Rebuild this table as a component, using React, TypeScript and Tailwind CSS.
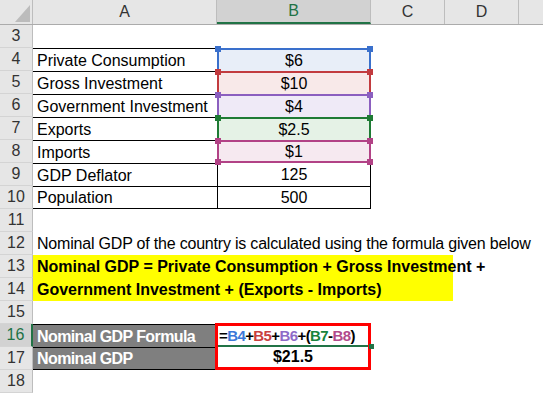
import React from "react";

const INPUTS = [
  { row: 4, label: "Private Consumption", value: "$6", border: "border-[#3a70cc]", fill: "bg-[#e8eef8]", handle: "bg-[#3a70cc]" },
  { row: 5, label: "Gross Investment", value: "$10", border: "border-[#c23b3f]", fill: "bg-[#f8e9e9]", handle: "bg-[#c23b3f]" },
  { row: 6, label: "Government Investment", value: "$4", border: "border-[#8b5fbf]", fill: "bg-[#efeaf7]", handle: "bg-[#8b5fbf]" },
  { row: 7, label: "Exports", value: "$2.5", border: "border-[#1e7b34]", fill: "bg-[#e5f2e6]", handle: "bg-[#1e7b34]" },
  { row: 8, label: "Imports", value: "$1", border: "border-[#b24286]", fill: "bg-[#f6e9f0]", handle: "bg-[#b24286]" },
];

const PLAIN = [
  { row: 9, label: "GDP Deflator", value: "125" },
  { row: 10, label: "Population", value: "500" },
];

function RowHead({ n, active }: { n: number; active?: boolean }) {
  return (
    <div
      className={`flex h-[23px] w-[33px] shrink-0 items-center justify-center border-b border-b-[#d4d4d4] ${
        active
          ? "border-r-2 border-r-[#217346] bg-[#d2d2d2] text-[#217346]"
          : "border-r border-r-[#bdbdbd] bg-[#e6e6e6] text-[#333333]"
      }`}
    >
      {n}
    </div>
  );
}

export default function App() {
  return (
    <div className="h-[393px] w-[543px] overflow-hidden bg-white font-['Liberation_Sans',Arial,sans-serif] text-[16px] leading-none text-black">
      {/* column headers */}
      <div className="flex h-[25px] border-b border-[#ababab] bg-[#e6e6e6] text-[#333333]">
        <div className="flex w-[33px] shrink-0 items-end justify-end border-r border-[#bdbdbd] pb-[2px] pr-[2px]">
          <svg width="15" height="17" viewBox="0 0 15 17">
            <polygon points="0,17 15,17 15,0" fill="#bcbcbc" />
          </svg>
        </div>
        <div className="flex w-[184px] items-center justify-center border-r border-[#bdbdbd]">A</div>
        <div className="flex w-[154px] items-center justify-center border-b-2 border-r border-b-[#217346] border-r-[#bdbdbd] bg-[#d2d2d2] text-[#217346]">
          B
        </div>
        <div className="flex w-[74px] items-center justify-center border-r border-[#bdbdbd]">C</div>
        <div className="flex w-[74px] items-center justify-center border-r border-[#bdbdbd]">D</div>
        <div className="flex-1" />
      </div>

      {/* row 3 */}
      <div className="flex h-[23px]">
        <RowHead n={3} />
      </div>

      {INPUTS.map((c, i) => (
        <div key={c.row} className="flex h-[23px]">
          <RowHead n={c.row} />
          <div className="flex w-[184px] items-center border-t border-black pl-[4px] pt-[1px]">{c.label}</div>
          <div
            className={`relative flex w-[154px] items-center justify-center border-x-2 border-t-2 pt-[1px] ${c.border} ${c.fill} ${
              i === INPUTS.length - 1 ? "border-b-2" : ""
            }`}
          >
            {c.value}
            <span className={`absolute -left-[4px] -top-[4px] h-[6px] w-[6px] ${c.handle}`} />
            <span className={`absolute -right-[4px] -top-[4px] h-[6px] w-[6px] ${c.handle}`} />
            {i === INPUTS.length - 1 && (
              <>
                <span className={`absolute -bottom-[4px] -left-[4px] h-[6px] w-[6px] ${c.handle}`} />
                <span className={`absolute -bottom-[4px] -right-[4px] h-[6px] w-[6px] ${c.handle}`} />
              </>
            )}
          </div>
        </div>
      ))}

      {PLAIN.map((c, i) => (
        <div key={c.row} className="flex h-[23px]">
          <RowHead n={c.row} />
          <div className={`flex w-[184px] items-center border-t border-black pl-[4px] pt-[1px] ${i === 1 ? "border-b" : ""}`}>
            {c.label}
          </div>
          <div className={`flex w-[154px] items-center justify-center border-x border-black pt-[1px] ${i === 1 ? "border-y" : ""}`}>
            {c.value}
          </div>
        </div>
      ))}

      <div className="flex h-[23px]">
        <RowHead n={11} />
      </div>

      <div className="flex h-[23px]">
        <RowHead n={12} />
        <div className="flex items-center whitespace-nowrap pl-[4px] pt-[1px] tracking-[-0.2px]">
          Nominal GDP of the country is calculated using the formula given below
        </div>
      </div>

      {/* yellow formula note */}
      <div className="flex">
        <div className="flex flex-col">
          <RowHead n={13} />
          <RowHead n={14} />
        </div>
        <div className="flex h-[46px] w-[420px] flex-col bg-[#ffff00] pl-[4px] font-bold whitespace-nowrap">
          <div className="flex h-[23px] items-center pt-[1px]">Nominal GDP = Private Consumption + Gross Investment +</div>
          <div className="flex h-[23px] items-center pt-[1px]">Government Investment + (Exports - Imports)</div>
        </div>
      </div>

      <div className="flex h-[23px]">
        <RowHead n={15} />
      </div>

      {/* result */}
      <div className="flex items-start">
        <div className="flex flex-col">
          <RowHead n={16} active />
          <RowHead n={17} />
        </div>
        <div className="flex w-[184px] flex-col font-bold tracking-[-0.6px] text-white">
          <div className="flex h-[23px] items-center border-t border-black bg-[#7f7f7f] pl-[4px] pt-[1px]">Nominal GDP Formula</div>
          <div className="flex h-[23px] items-center border-y border-black bg-[#7f7f7f] pl-[4px] pt-[1px]">Nominal GDP</div>
        </div>
        <div className="relative -ml-[2px] -mt-[1px] flex h-[47px] w-[156px] flex-col border-[3px] border-[#ff0000] font-bold">
          <div className="flex h-[21px] items-center border-b-2 border-[#217346] pl-[1px] text-[15px] tracking-[-0.6px] whitespace-nowrap">
            <span>=</span>
            <span className="text-[#3c78d8]">B4</span>
            <span>+</span>
            <span className="text-[#c9403f]">B5</span>
            <span>+</span>
            <span className="text-[#8e6ac8]">B6</span>
            <span>+(</span>
            <span className="text-[#18843c]">B7</span>
            <span>-</span>
            <span className="text-[#b24a8c]">B8</span>
            <span>)</span>
          </div>
          <div className="flex flex-1 items-center justify-center">$21.5</div>
          <span className="absolute -right-[6px] top-[18px] h-[5px] w-[5px] bg-[#217346]" />
        </div>
      </div>

      <div className="flex h-[23px]">
        <RowHead n={18} />
      </div>
    </div>
  );
}
